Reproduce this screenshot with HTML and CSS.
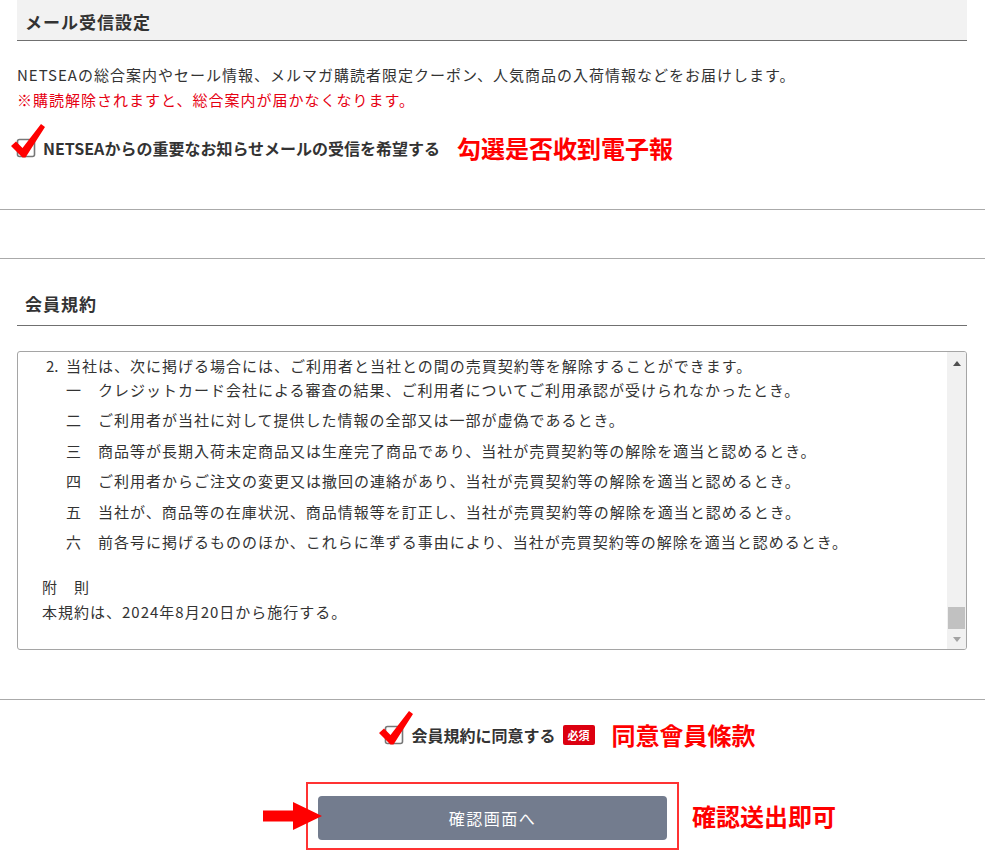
FILE: index.html
```html
<!DOCTYPE html>
<html lang="ja">
<head>
<meta charset="utf-8">
<title>メール受信設定</title>
<link rel="stylesheet" href="styles.css">
</head>
<body>
<section class="sec sec-mail">
  <div class="inner">
    <h2 class="sec-head sec-head-gray">メール受信設定</h2>
    <p class="desc">NETSEAの総合案内やセール情報、メルマガ購読者限定クーポン、人気商品の入荷情報などをお届けします。<br><span class="warn">※購読解除されますと、総合案内が届かなくなります。</span></p>
    <div class="check-row">
      <svg class="cb" width="33" height="36" viewBox="0 0 33 36">
        <rect x="7.5" y="9.5" width="17" height="17" rx="2" fill="#fff" stroke="#777" stroke-width="1.6"/>
        <polygon points="1,16 6,11.5 12.5,18 31,-6 35,-3 15.5,27.5 12.5,27.5" fill="#f00"/>
      </svg>
      <span class="cb-label">NETSEAからの重要なお知らせメールの受信を希望する</span>
      <span class="note note-1">勾選是否收到電子報</span>
    </div>
  </div>
</section>

<section class="sec sec-terms">
  <div class="inner">
    <h2 class="sec-head">会員規約</h2>
    <div class="terms-box">
      <div class="terms-text">
        <div class="item"><span class="num">2.</span>当社は、次に掲げる場合には、ご利用者と当社との間の売買契約等を解除することができます。</div>
        <ul class="sub">
          <li>一　クレジットカード会社による審査の結果、ご利用者についてご利用承認が受けられなかったとき。</li>
          <li>二　ご利用者が当社に対して提供した情報の全部又は一部が虚偽であるとき。</li>
          <li>三　商品等が長期入荷未定商品又は生産完了商品であり、当社が売買契約等の解除を適当と認めるとき。</li>
          <li>四　ご利用者からご注文の変更又は撤回の連絡があり、当社が売買契約等の解除を適当と認めるとき。</li>
          <li>五　当社が、商品等の在庫状況、商品情報等を訂正し、当社が売買契約等の解除を適当と認めるとき。</li>
          <li>六　前各号に掲げるもののほか、これらに準ずる事由により、当社が売買契約等の解除を適当と認めるとき。</li>
        </ul>
        <p class="fusoku">附　則<br>本規約は、2024年8月20日から施行する。</p>
      </div>
      <div class="scrollbar">
        <div class="sb-btn"><span class="tri tri-up"></span></div>
        <div class="sb-track"><div class="sb-thumb"></div></div>
        <div class="sb-btn"><span class="tri tri-down"></span></div>
      </div>
    </div>
  </div>
</section>

<section class="sec-submit">
  <div class="row3 agree-row">
    <div class="agree">
      <svg class="cb" width="33" height="36" viewBox="0 0 33 36">
        <rect x="7.5" y="9.5" width="17" height="17" rx="2" fill="#fff" stroke="#777" stroke-width="1.6"/>
        <polygon points="1,16 6,11.5 12.5,18 31,-6 35,-3 15.5,27.5 12.5,27.5" fill="#f00"/>
      </svg>
      <span class="cb-label">会員規約に同意する</span>
      <span class="badge">必須</span>
    </div>
    <span class="note note-2">同意會員條款</span>
  </div>
  <div class="row3 btn-row">
    <svg class="arrow" width="59" height="30" viewBox="0 0 59 30">
      <polygon points="0,9.5 30,9.5 30,1 59,15 30,29 30,20.5 0,20.5" fill="#f00"/>
    </svg>
    <div class="btn-frame"><button class="btn" type="button">確認画面へ</button></div>
    <span class="note note-3">確認送出即可</span>
  </div>
</section>
</body>
</html>
```
FILE: styles.css
```css
html, body {
  margin: 0;
  padding: 0;
  background: #fff;
}
body {
  font-family: "Noto Sans CJK JP", "Noto Sans", sans-serif;
  color: #333;
  font-size: 15px;
  width: 985px;
}
.sec {
  border-bottom: 1px solid #aaa;
}
.inner {
  padding: 0 18px 0 17px;
}
.sec-mail {
  padding-bottom: 43px;
}
.sec-head {
  margin: 0;
  font-size: 17px;
  font-weight: 700;
  letter-spacing: 1px;
  color: #333;
  padding-left: 8px;
  border-bottom: 1px solid #707070;
}
.sec-head-gray {
  background: #f2f2f2;
  height: 40px;
  line-height: 43px;
}
.desc {
  margin: 21px 0 0;
  line-height: 25px;
  letter-spacing: 1px;
}
.warn {
  color: #e60012;
}
.check-row {
  display: flex;
  align-items: center;
  height: 36px;
  margin-top: 18px;
}
.cb {
  overflow: visible;
  flex: none;
}
.check-row .cb {
  margin-left: -7px;
}
.cb-label {
  font-size: 16px;
  font-weight: 700;
  color: #333;
}
.note {
  font-family: "Noto Sans CJK TC", "Noto Sans CJK JP", sans-serif;
  font-weight: 700;
  font-size: 24px;
  color: #f00;
  line-height: 30px;
}
.note-1 {
  margin-left: 17px;
}
.sec-terms {
  margin-top: 48px;
  border-top: 1px solid #aaa;
  padding-bottom: 49px;
}
.sec-terms .sec-head {
  margin-top: 30px;
  line-height: 30px;
  padding-bottom: 6px;
}
.terms-box {
  margin-top: 25px;
  height: 297px;
  border: 1px solid #a5a5a5;
  border-radius: 3px;
  display: flex;
  overflow: hidden;
}
.terms-text {
  flex: 1;
  padding: 2px 0 0 24px;
  letter-spacing: 1px;
  overflow: hidden;
}
.item {
  line-height: 24px;
}
.num {
  display: inline-block;
  width: 20px;
  padding-left: 4px;
  letter-spacing: 0;
}
.sub {
  list-style: none;
  margin: 0;
  padding: 0 0 0 24px;
}
.sub li {
  line-height: 24px;
}
.sub li + li {
  margin-top: 6.4px;
}
.fusoku {
  margin: 20px 0 0;
  line-height: 25px;
}
.scrollbar {
  width: 19px;
  background: #f1f1f1;
  display: flex;
  flex-direction: column;
}
.sb-btn {
  height: 20px;
  display: flex;
  align-items: center;
  justify-content: center;
}
.tri {
  width: 0;
  height: 0;
  border-left: 4px solid transparent;
  border-right: 4px solid transparent;
}
.tri-up {
  border-bottom: 5px solid #505050;
  margin-top: 2px;
}
.tri-down {
  border-top: 5px solid #a3a3a3;
}
.sb-track {
  flex: 1;
  display: flex;
  flex-direction: column;
  justify-content: flex-end;
  padding: 0 1px;
}
.sb-thumb {
  height: 22px;
  background: #c1c1c1;
}
.sec-submit {
  padding-top: 17px;
}
.row3 {
  display: grid;
  grid-template-columns: 1fr auto 1fr;
  align-items: center;
}
.agree-row {
  height: 36px;
}
.agree {
  grid-column: 2;
  display: flex;
  align-items: center;
  padding-right: 12px;
}
.badge {
  margin-left: 7px;
  background: #dc0010;
  color: #fff;
  font-size: 11px;
  font-weight: 700;
  line-height: 20px;
  height: 20px;
  padding: 0 5px;
  border-radius: 2px;
}
.note-2 {
  grid-column: 3;
  justify-self: start;
  margin-left: 5px;
}
.btn-row {
  margin-top: 29px;
}
.arrow {
  justify-self: end;
  margin-right: -16px;
  position: relative;
  z-index: 1;
}
.btn-frame {
  border: 2px solid #f33;
  padding: 12px 10px 8px;
}
.btn {
  display: block;
  width: 349px;
  height: 44px;
  border: 0;
  border-radius: 4px;
  background: #737c8e;
  color: #fff;
  font-family: "Noto Sans CJK JP", sans-serif;
  font-size: 16px;
  letter-spacing: 1.5px;
  padding: 0;
}
.note-3 {
  justify-self: start;
  margin-left: 13px;
}
```
